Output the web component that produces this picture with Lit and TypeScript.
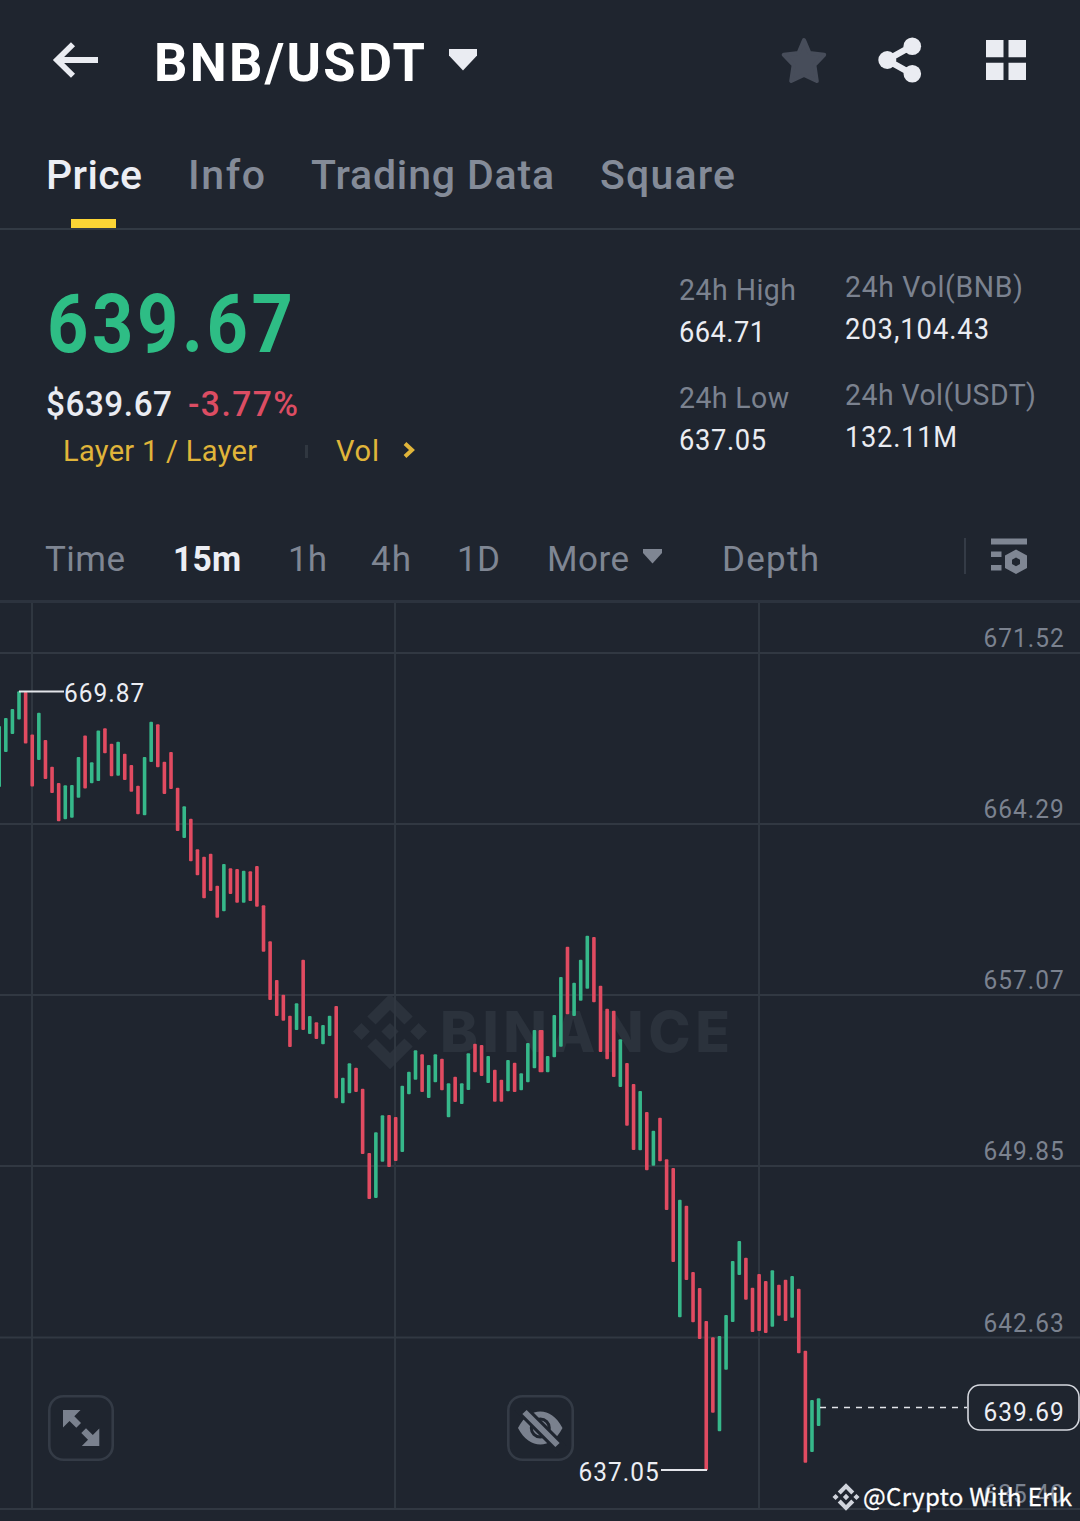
import { LitElement, html, svg, css } from "lit";
import { customElement, property } from "lit/decorators.js";

/** One line of text whose tracking is tuned so that it spans a given width. */
@customElement("fit-text")
class FitText extends LitElement {
  @property({ type: Number }) span = 0;
  @property({ type: Number }) squeeze = 1;
  @property() text = "";

  static styles = css`
    :host {
      display: block;
      white-space: pre;
    }
    .run {
      display: inline-block;
      vertical-align: top;
      transform-origin: 0 50%;
    }
  `;

  updated() {
    const run = this.renderRoot.querySelector(".run") as HTMLElement;
    run.style.letterSpacing = "0px";
    run.style.transform = "none";
    const natural = run.getBoundingClientRect().width;
    const gaps = Math.max(1, this.text.length - 1);
    run.style.letterSpacing = `${(this.span / this.squeeze - natural) / gaps}px`;
    if (this.squeeze !== 1) run.style.transform = `scaleX(${this.squeeze})`;
    this.style.width = `${this.span}px`;
  }

  render() {
    return html`<span class="run">${this.text}</span>`;
  }
}

type Bar = [string, number, number];

const STEP = 6.608;
const FIRST_X = -0.8;

/* direction, top, bottom for every 15 minute bar */
const BARS: Bar[] = [
  ["g", 726, 787], ["g", 718, 752], ["g", 709, 734], ["g", 691.3, 719.5], ["r", 692, 743.5],
  ["r", 734.5, 786.5], ["g", 712.8, 760], ["r", 740, 779], ["r", 766.7, 793], ["r", 783, 821.3],
  ["g", 785.3, 819.3], ["g", 785, 817.7], ["g", 757, 797.7], ["r", 735.5, 788.5], ["g", 762.3, 783.3],
  ["g", 730.5, 781], ["r", 728.3, 753.3], ["r", 743.7, 776.3], ["g", 741.7, 775.7], ["r", 753.7, 780],
  ["r", 765, 791.7], ["r", 785.7, 814.3], ["g", 757, 815.3], ["g", 721.7, 762], ["r", 724.3, 767.3],
  ["r", 761.7, 794], ["r", 752, 789], ["r", 787.7, 831], ["g", 806.3, 838], ["r", 818.7, 861.3],
  ["r", 849.3, 875.3], ["r", 856.7, 898.3], ["r", 853.7, 891], ["r", 885.7, 917.7], ["g", 864, 911.3],
  ["r", 868.3, 894], ["r", 869, 902.7], ["g", 870.7, 902.7], ["r", 871.3, 901], ["r", 866, 906.7],
  ["r", 905.3, 951.7], ["r", 941.3, 1000], ["r", 980, 1016], ["r", 994.7, 1020.7], ["r", 1015.7, 1047],
  ["g", 1003.3, 1030], ["r", 959.7, 1030], ["g", 1016, 1034], ["r", 1022.3, 1039], ["g", 1025, 1044.3],
  ["g", 1015.7, 1036], ["r", 1006, 1098.3], ["g", 1077.7, 1103.3], ["g", 1063.3, 1093.3], ["r", 1067.7, 1092],
  ["r", 1088.7, 1154], ["r", 1153, 1199], ["g", 1132.3, 1198], ["g", 1115.3, 1161.7], ["r", 1115, 1167],
  ["r", 1117, 1161], ["g", 1085.7, 1152], ["g", 1071.7, 1094.3], ["g", 1050.3, 1079.7], ["r", 1054.3, 1092],
  ["g", 1065, 1098], ["g", 1054.3, 1082.3], ["r", 1058.7, 1090.3], ["g", 1083.3, 1117.3], ["r", 1076.7, 1102],
  ["g", 1083.3, 1104], ["g", 1053.3, 1090], ["r", 1043.7, 1072.3], ["r", 1045, 1076], ["g", 1056, 1083],
  ["r", 1069.7, 1101.7], ["r", 1079.7, 1101.7], ["g", 1060, 1091.3], ["r", 1062.7, 1092], ["g", 1073.3, 1090.3],
  ["g", 1043, 1082.3], ["g", 1030, 1068.3], ["r", 1030, 1072.3], ["g", 1056, 1072.3], ["g", 1015, 1057.3],
  ["g", 977, 1046.7], ["r", 946.7, 1014.3], ["g", 982.7, 1016], ["g", 959.7, 1000.7], ["g", 935.7, 988.7],
  ["r", 937, 1002.3], ["r", 985.7, 1052], ["r", 1008.7, 1059.3], ["r", 1010.7, 1077], ["g", 1039.3, 1087],
  ["r", 1063, 1125.7], ["r", 1084, 1150], ["g", 1091, 1150.3], ["r", 1112, 1170.3], ["g", 1130.7, 1165.7],
  ["r", 1117.7, 1161.3], ["r", 1159.3, 1210], ["r", 1168, 1262], ["g", 1199.7, 1317.3], ["r", 1205.7, 1280],
  ["r", 1272, 1322.3], ["r", 1288, 1339], ["r", 1321, 1470.3], ["r", 1337.3, 1412.7], ["g", 1336, 1431.3],
  ["g", 1315, 1369.7], ["g", 1261, 1322], ["g", 1241, 1275], ["r", 1257.7, 1299.7], ["r", 1287.7, 1332],
  ["r", 1274, 1331], ["r", 1281, 1333], ["g", 1270.3, 1326.7], ["r", 1284.7, 1315.7], ["r", 1279.7, 1321],
  ["g", 1276, 1317.7], ["r", 1288.7, 1353.3], ["r", 1350.7, 1462.7], ["g", 1400, 1452], ["g", 1398.3, 1426],
];

const LEVELS: [string, number][] = [
  ["671.52", 653], ["664.29", 824], ["657.07", 995], ["649.85", 1166], ["642.63", 1337.5],
];

@customElement("price-chart")
class PriceChart extends LitElement {
  static styles = css`
    :host {
      display: block;
    }
    .plot {
      display: block;
      font-family: Roboto, "Liberation Sans", sans-serif;
      font-size: 26px;
    }
    .grid {
      stroke: #313842;
      stroke-width: 1.9;
    }
    .edge {
      stroke: #2c333e;
      stroke-width: 3;
    }
    .g {
      fill: #36b88a;
    }
    .r {
      fill: #e14b61;
    }
    .axis {
      fill: #7b828f;
    }
    .mark {
      fill: #eceef4;
    }
    .lead {
      stroke: #e3e5ea;
      stroke-width: 1.8;
    }
    .dash {
      stroke: #e3e5ea;
      stroke-width: 1.6;
      stroke-dasharray: 6 6;
    }
    .tag {
      fill: #1f252f;
      stroke: #d5d8df;
      stroke-width: 1.6;
    }
    .brand {
      fill: #2b323c;
    }
    .brand-name {
      font: 800 57px Inter, "Liberation Sans", sans-serif;
    }
    .box {
      fill: #1f252f;
      stroke: #343b46;
      stroke-width: 2.6;
    }
    .glyph {
      fill: #7a818e;
    }
    .gap {
      fill: none;
      stroke: #1f252f;
      stroke-width: 12;
    }
    .slash {
      fill: none;
      stroke: #7a818e;
      stroke-width: 6;
    }
    .credit-logo {
      fill: #d0d4dc;
    }
    .credit {
      fill: #ffffff;
      stroke: #ffffff;
      stroke-width: 0.3;
      font: 400 24px "Noto Sans CJK SC", sans-serif;
    }
  `;

  private diamond(cx: number, cy: number, r: number) {
    return `M${cx - r} ${cy}L${cx} ${cy - r}L${cx + r} ${cy}L${cx} ${cy + r}Z`;
  }

  private logo(cx: number, cy: number, k: number) {
    const chevron = (s: number) =>
      `M${cx - 22.7 * k} ${cy - s * 15 * k}L${cx} ${cy - s * 37.7 * k}L${cx + 22.7 * k} ${cy - s * 15 * k}` +
      `L${cx + 14.4 * k} ${cy - s * 7 * k}L${cx} ${cy - s * 21.6 * k}L${cx - 14.4 * k} ${cy - s * 7 * k}Z`;
    return (
      chevron(1) + chevron(-1) +
      this.diamond(cx, cy, 8.6 * k) +
      this.diamond(cx - 28.6 * k, cy, 8.4 * k) +
      this.diamond(cx + 28.6 * k, cy, 8.4 * k)
    );
  }

  private bar([dir, top, bottom]: Bar, i: number) {
    const w = i === 82 ? 5 : 3.6;
    return svg`<rect class=${dir} x=${FIRST_X + STEP * i - w / 2} y=${top} width=${w} height=${bottom - top} rx="1"></rect>`;
  }

  private figure(kind: string, text: string, x: number, y: number) {
    return svg`<text class=${kind} transform="translate(${x} ${y}) scale(.94 1)" textLength="85.500">${text}</text>`;
  }

  render() {
    return html`
      <svg class="plot" width="1080" height="921" viewBox="0 600 1080 921">
        <path class="brand" d=${this.logo(390, 1031.5, 1)}></path>
        <text class="brand brand-name" x="440" y="1052" textLength="290">BINANCE</text>
        <path class="edge" d="M0 601.5H1080"></path>
        ${LEVELS.map(([, y]) => svg`<path class="grid" d="M0 ${y}H1080"></path>`)}
        ${[32, 395, 759].map((x) => svg`<path class="grid" d="M${x} 603V1509"></path>`)}
        <path class="grid" d="M0 1509H1080"></path>
        ${BARS.map((b, i) => this.bar(b, i))}

        <path class="lead" d="M19 691.5H64M661 1470H707"></path>
        ${this.figure("mark", "669.87", 64, 702)}
        ${this.figure("mark", "637.05", 578.5, 1481)}

        ${LEVELS.map(([t, y]) => this.figure("axis", t, 983.5, y - 6))}
        ${this.figure("axis", "635.40", 983.5, 1503)}

        <path class="dash" d="M820 1407.5H967"></path>
        <rect class="tag" x="968" y="1385" width="111" height="45" rx="12"></rect>
        ${this.figure("mark", "639.69", 983.5, 1421)}

        <rect class="box" x="49.3" y="1396.3" width="63.4" height="63.4" rx="14"></rect>
        <path
          class="glyph"
          d="M63 1410H80.5L74.3 1416.3L81 1423L76.3 1427.7L69.5 1421L63 1427.5ZM99.3 1446H81.8L88 1439.7L81.3 1433L86 1428.3L92.8 1435L99.3 1428.5Z"
        ></path>

        <rect class="box" x="508.3" y="1396.3" width="64.4" height="63.4" rx="14"></rect>
        <path
          class="glyph"
          fill-rule="evenodd"
          d="M518 1428C524 1416.5 532 1411.500 540.300 1411.500S556.500 1416.500 562.500 1428C556.500 1439.500 548.500 1444.500 540.300 1444.500S524 1439.500 518 1428Z
             M540.300 1417.500A10.500 10.500 0 1 0 540.300 1438.500A10.500 10.500 0 1 0 540.300 1417.500Z
             M540.300 1420.500A7.500 7.500 0 1 1 540.300 1435.500A7.500 7.500 0 1 1 540.300 1420.500Z"
        ></path>
        <path class="gap" d="M519 1406.500L562 1449.500"></path>
        <path class="slash" d="M524.500 1412L557.500 1445"></path>

        <path class="credit-logo" d=${this.logo(846, 1497, 0.365)}></path>
        <text class="credit" x="863" y="1506" textLength="209">@Crypto With Erik</text>
      </svg>
    `;
  }
}

@customElement("app-root")
class AppRoot extends LitElement {
  static styles = css`
    :host {
      display: block;
      width: 1080px;
      height: 1521px;
      overflow: hidden;
      background: #1f252f;
      color: #eaecf2;
      font-family: Roboto, "Liberation Sans", sans-serif;
    }
    svg {
      display: block;
      flex: none;
    }
    fit-text {
      flex: none;
    }
    .header {
      display: flex;
      align-items: center;
      box-sizing: border-box;
      height: 122px;
      padding: 0 52px 2px;
    }
    .pair {
      margin: 5px 0 0 54px;
      color: #fff;
      font-size: 54px;
      font-weight: 700;
      line-height: 64px;
    }
    .caret {
      margin-left: 24px;
    }
    .actions {
      display: flex;
      align-items: center;
      margin-left: auto;
      gap: 50px;
    }
    .tabs {
      display: flex;
      height: 106px;
      padding-left: 46px;
      border-bottom: 2px solid #323a44;
      gap: 46px;
      font-size: 41px;
      font-weight: 500;
      line-height: 106px;
      color: #848b98;
    }
    .tab {
      position: relative;
    }
    .tab.active {
      color: #eceef4;
    }
    .tab.active::after {
      content: "";
      position: absolute;
      left: 25px;
      bottom: 0;
      width: 45px;
      height: 9px;
      background: #fcd535;
    }
    .summary {
      display: flex;
      box-sizing: border-box;
      height: 283px;
      padding-left: 46px;
    }
    .quote {
      width: 633px;
      padding-top: 46px;
    }
    .last {
      padding-left: 1px;
      color: #2ebd85;
      font-size: 82px;
      font-weight: 700;
      line-height: 96px;
    }
    .change {
      display: flex;
      margin-top: 10px;
      gap: 16px;
      font-size: 35px;
      font-weight: 500;
      line-height: 46px;
    }
    .down {
      color: #dc4d63;
    }
    .tags {
      display: flex;
      align-items: center;
      margin-top: -1px;
      padding-left: 17px;
      color: #e0b53a;
      font-size: 29px;
      line-height: 48px;
    }
    .rule {
      width: 3px;
      height: 13px;
      margin: 0 28px 0 48px;
      background: #303740;
    }
    .chevron {
      margin-left: 23px;
    }
    .stats {
      display: flex;
      width: 166px;
      flex-direction: column;
      padding-top: 39px;
      gap: 24px;
      font-size: 29px;
      line-height: 42px;
    }
    .stats.volume {
      width: 200px;
      padding-top: 36px;
    }
    .label {
      color: #7b828f;
    }
    .intervals {
      display: flex;
      align-items: center;
      box-sizing: border-box;
      height: 87px;
      padding: 6px 53px 0 45px;
      color: #7f8693;
      font-size: 35px;
      line-height: 50px;
    }
    .intervals .on {
      color: #eceef4;
      font-weight: 700;
    }
    .cell {
      flex: none;
    }
    .c1 { width: 128px; }
    .c2 { width: 115px; }
    .c3 { width: 83px; }
    .c4 { width: 86px; }
    .c5 { width: 90px; }
    .c6 { width: 96px; }
    .c7 { width: 79px; }
    .divider {
      width: 2px;
      height: 36px;
      margin: -8px 25px 0 auto;
      background: #343b46;
    }
    .lift {
      margin-top: -8px;
    }
  `;

  private stat(label: string, lw: number, value: string, vw: number) {
    return html`<div>
      <fit-text class="label" .text=${label} .span=${lw} .squeeze=${0.98}></fit-text>
      <fit-text .text=${value} .span=${vw} .squeeze=${0.94}></fit-text>
    </div>`;
  }

  private tab(name: string, w: number, active = false) {
    return html`<div class="tab ${active ? "active" : ""}">
      <fit-text .text=${name} .span=${w}></fit-text>
    </div>`;
  }

  render() {
    return html`
      <div class="header">
        <svg width="48" height="40" viewBox="52 40 48 40" fill="none" stroke="#eaecf2" stroke-width="5.800">
          <path d="M73 44.300L57 60L73 75.700M57.500 60H98"></path>
        </svg>
        <fit-text class="pair" .text=${"BNB/USDT"} .span=${271} .squeeze=${0.97}></fit-text>
        <svg class="caret" width="28" height="22" viewBox="449 50 28 22">
          <path fill="#eaecf2" d="M449 50H477V56.500L463 71.500L449 56.500Z"></path>
        </svg>
        <div class="actions">
          <svg width="46" height="48" viewBox="781 36 46 48">
            <path
              fill="#474d5a"
              stroke="#474d5a"
              stroke-width="4"
              stroke-linejoin="round"
              d="M804 40L809.500 53L824.200 54.800L814.400 65L816.800 81L804 75L791.200 81L793.600 65L783.800 54.800L798.500 53Z"
            ></path>
          </svg>
          <svg width="46" height="48" viewBox="877 36 46 48" fill="#eaecf2">
            <path d="M912 46L887 60L912 74" fill="none" stroke="#eaecf2" stroke-width="6.500"></path>
            <circle cx="887.300" cy="60" r="9"></circle>
            <circle cx="912.300" cy="46.300" r="8.800"></circle>
            <circle cx="912.300" cy="73.700" r="8.800"></circle>
          </svg>
          <svg width="55" height="40" viewBox="973 40 55 40">
            <path
              fill="#eaecf2"
              d="M986 40H1003.500V57.300H986ZM1008.500 40H1026V57.300H1008.500ZM986 62.700H1003.500V80H986ZM1008.500 62.700H1026V80H1008.500Z"
            ></path>
          </svg>
        </div>
      </div>

      <div class="tabs">
        ${this.tab("Price", 96, true)} ${this.tab("Info", 77)} ${this.tab("Trading Data", 243)}
        ${this.tab("Square", 135)}
      </div>

      <div class="summary">
        <div class="quote">
          <fit-text class="last" .text=${"639.67"} .span=${246} .squeeze=${0.88}></fit-text>
          <div class="change">
            <fit-text .text=${"$639.67"} .span=${126} .squeeze=${0.95}></fit-text>
            <fit-text class="down" .text=${"-3.77%"} .span=${110} .squeeze=${0.96}></fit-text>
          </div>
          <div class="tags">
            <fit-text .text=${"Layer 1 / Layer"} .span=${194}></fit-text>
            <div class="rule"></div>
            <fit-text .text=${"Vol"} .span=${43}></fit-text>
            <svg class="chevron" width="14" height="18" viewBox="402 441 14 18">
              <path fill="none" stroke="#e0b53a" stroke-width="4" d="M405 442.500L412 449L405 455.500"></path>
            </svg>
          </div>
        </div>
        <div class="stats">
          ${this.stat("24h High", 117, "664.71", 86)} ${this.stat("24h Low", 110, "637.05", 87)}
        </div>
        <div class="stats volume">
          ${this.stat("24h Vol(BNB)", 178, "203,104.43", 144)}
          ${this.stat("24h Vol(USDT)", 191, "132.11M", 112)}
        </div>
      </div>

      <div class="intervals">
        <div class="cell c1"><fit-text .text=${"Time"} .span=${80}></fit-text></div>
        <div class="cell c2"><fit-text class="on" .text=${"15m"} .span=${68} .squeeze=${0.96}></fit-text></div>
        <div class="cell c3"><fit-text .text=${"1h"} .span=${39}></fit-text></div>
        <div class="cell c4"><fit-text .text=${"4h"} .span=${40}></fit-text></div>
        <div class="cell c5"><fit-text .text=${"1D"} .span=${43}></fit-text></div>
        <div class="cell c6"><fit-text .text=${"More"} .span=${82}></fit-text></div>
        <svg class="lift c7" width="79" height="16" viewBox="643 547 79 16">
          <path fill="#7f8693" d="M643 548H662V552L652.500 562.500L643 552Z"></path>
        </svg>
        <fit-text .text=${"Depth"} .span=${97}></fit-text>
        <div class="divider"></div>
        <svg class="lift" width="36" height="36" viewBox="991 538 36 36" fill="#7f8693">
          <path
            fill-rule="evenodd"
            d="M991 538.500H1027V544.500H991ZM991 551.500H1001.500V557H991ZM991 565H1001.500V570.500H991ZM1016 549.500L1027 555.500V568L1016 574L1005 568V555.500ZM1016 557.500L1020 559.700V564L1016 566.200L1012 564V559.700Z"
          ></path>
        </svg>
      </div>

      <price-chart></price-chart>
    `;
  }
}
